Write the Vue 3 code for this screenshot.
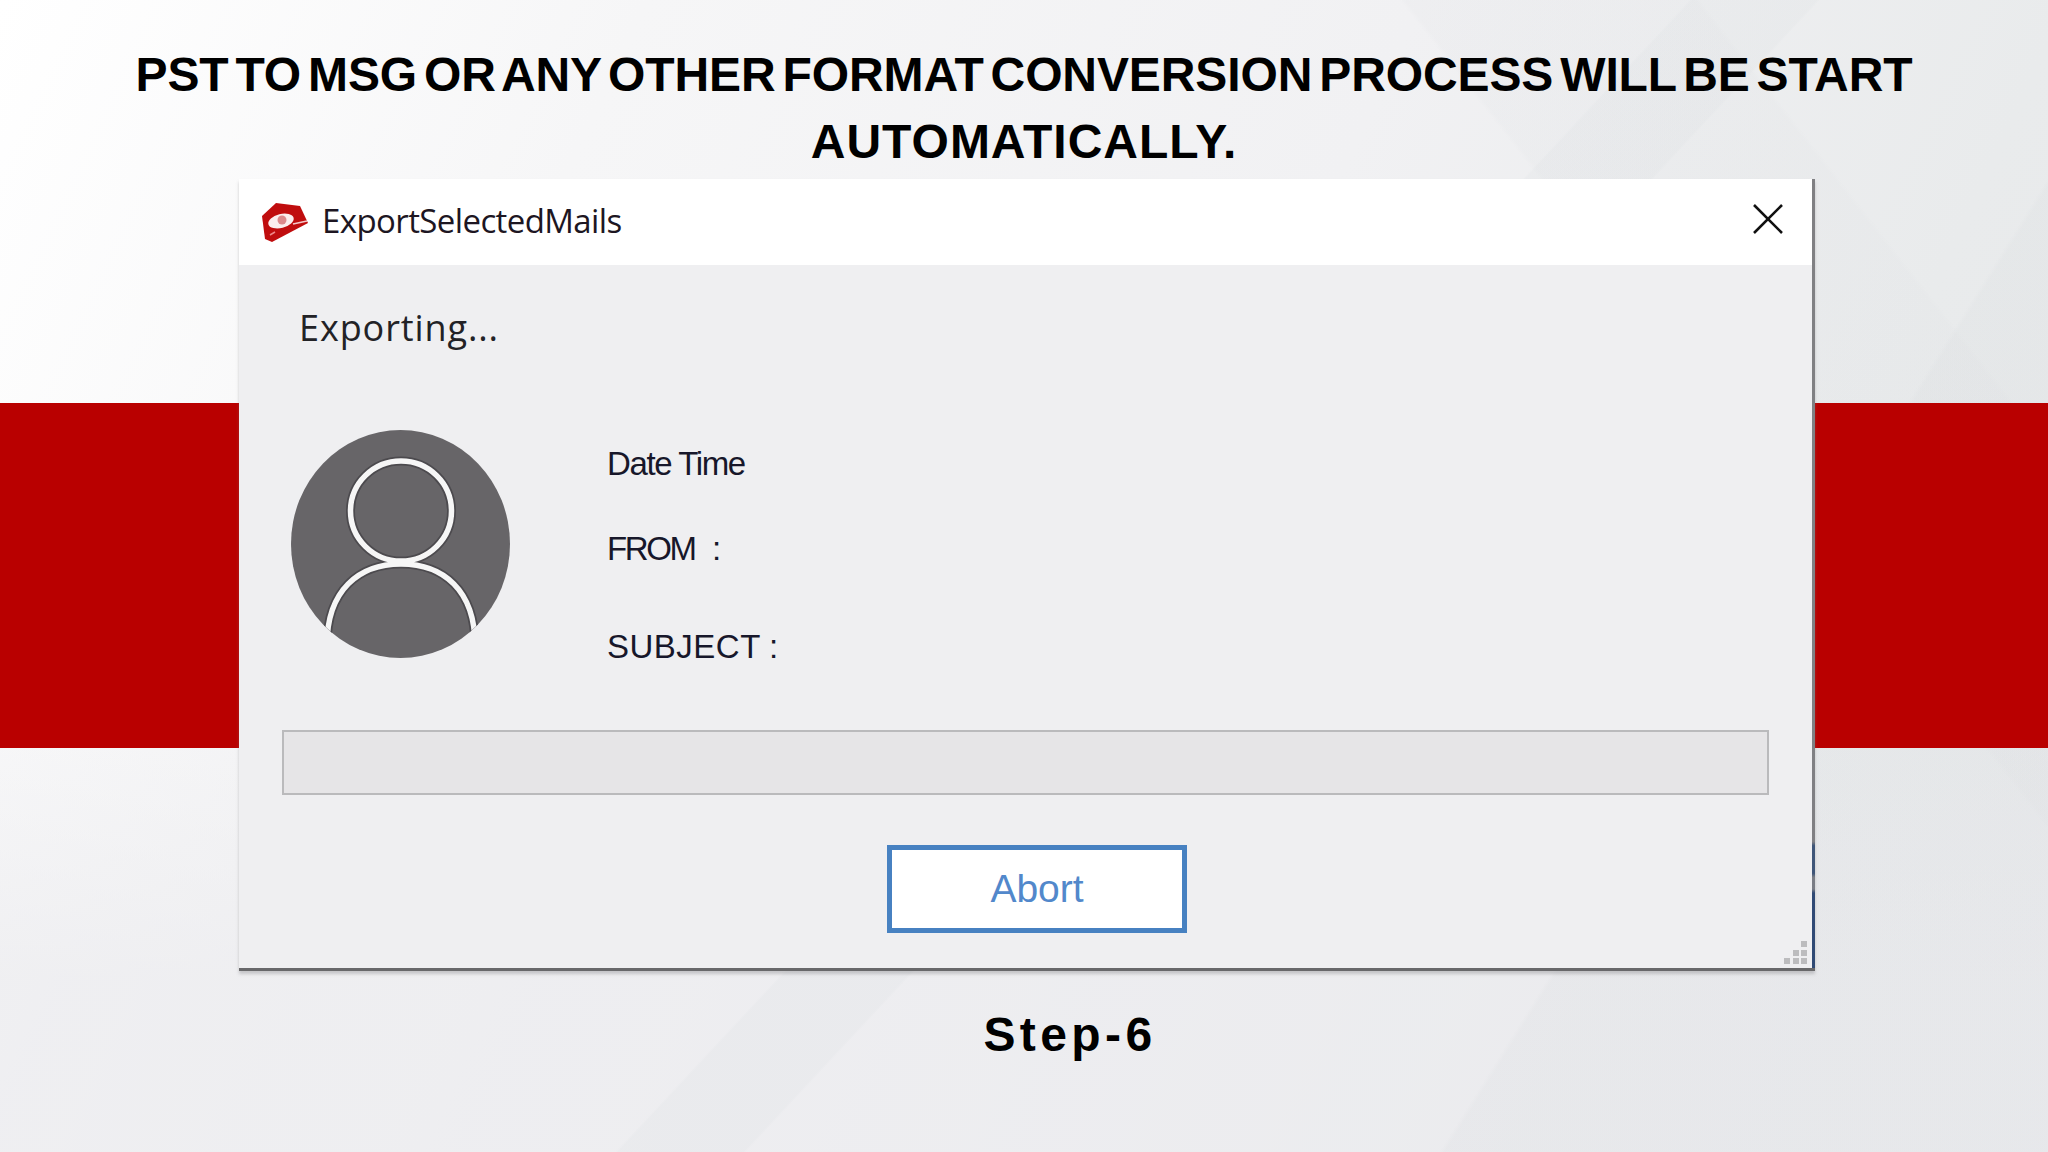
<script setup>
const labels = [
  { text: 'Date Time', cls: 'first' },
  { text: 'FROM  :', cls: 'second' },
  { text: 'SUBJECT :', cls: 'third' },
]
const grip = [0, 0, 1, 0, 1, 1, 1, 1, 1]
</script>

<template>
  <main class="page">
    <h1 class="headline">PST TO MSG OR ANY OTHER FORMAT CONVERSION PROCESS WILL BE START<br /><span class="headline-end">AUTOMATICALLY.</span></h1>

    <section class="dialog">
      <header class="titlebar">
        <svg class="logo" viewBox="0 0 46 40" width="46" height="40" aria-hidden="true">
          <path d="M14 1 L38 4 L46 21 L10 40 L3 37 L0 14 Z" fill="#c00d0e" />
          <ellipse cx="19" cy="19" rx="13" ry="7" transform="rotate(-14 19 19)" fill="#fbeeee" />
          <circle cx="20" cy="18" r="4.5" fill="#dc8a8c" />
          <path d="M31 22 L45 19" stroke="#f3c9ca" stroke-width="1.6" />
          <path d="M8 33 L13 30" stroke="#e88" stroke-width="1.5" />
        </svg>
        <span class="title">ExportSelectedMails</span>
        <svg class="close" viewBox="0 0 30 30" width="30" height="30" aria-hidden="true">
          <path d="M1 1 L29 29 M29 1 L1 29" stroke="#111" stroke-width="2.6" />
        </svg>
      </header>

      <div class="status">Exporting...</div>

      <div class="details">
        <svg class="avatar" viewBox="0 0 219 228" width="219" height="228" aria-hidden="true">
          <defs>
            <clipPath id="avatar-disc">
              <ellipse cx="109.5" cy="114" rx="109.5" ry="114" />
            </clipPath>
          </defs>
          <ellipse cx="109.5" cy="114" rx="109.5" ry="114" fill="#676568" />
          <g fill="none" clip-path="url(#avatar-disc)">
            <ellipse cx="110" cy="81" rx="50.5" ry="50" stroke="#4c4a4e" stroke-width="9" />
            <path d="M36 215 C36 160 68 134 110 134 C152 134 184 160 184 215" stroke="#4c4a4e" stroke-width="9" />
            <ellipse cx="110" cy="81" rx="50.5" ry="50" stroke="#f6f6f6" stroke-width="5.5" />
            <path d="M36 215 C36 160 68 134 110 134 C152 134 184 160 184 215" stroke="#f6f6f6" stroke-width="5.5" />
          </g>
        </svg>
        <ul class="fields">
          <li v-for="label in labels" :key="label.text" :class="label.cls">{{ label.text }}</li>
        </ul>
      </div>

      <div class="progress"></div>
      <button class="abort" type="button">Abort</button>

      <div class="grip" aria-hidden="true">
        <i v-for="(on, index) in grip" :key="index" :class="{ on }"></i>
      </div>
    </section>

    <p class="step">Step-6</p>
  </main>
</template>

<style scoped>
.page {
  width: 2048px;
  height: 1152px;
  overflow: hidden;
  box-sizing: border-box;
  padding-top: 42px;
  font-family: "Liberation Sans", Arial, sans-serif;
  color: #000;
  background:
    linear-gradient(#b90000, #b90000) 0 403px / 100% 345px no-repeat,
    linear-gradient(133deg, transparent 54.1%, rgba(214, 219, 222, 0.16) 54.2%, rgba(214, 219, 222, 0.16) 58.2%, transparent 58.3%),
    linear-gradient(122deg, transparent 78%, rgba(208, 212, 215, 0.14) 78.2%),
    linear-gradient(52deg, transparent 78%, rgba(222, 224, 227, 0.16) 78.2%, rgba(222, 224, 227, 0.16) 88%, transparent 88.2%),
    linear-gradient(180deg, transparent 55%, rgba(236, 236, 239, 0.75) 85%),
    linear-gradient(115deg, #ffffff 0%, #f6f6f7 25%, #f1f1f3 55%, #e9ebec 80%, #e6e8ea 100%);
}

.headline {
  margin: 0;
  text-align: center;
  font-size: 48px;
  font-weight: 700;
  line-height: 66.5px;
  letter-spacing: -0.1px;
  word-spacing: -6.3px;
}

.headline-end {
  letter-spacing: 1px;
}

.dialog {
  position: relative;
  box-sizing: border-box;
  width: 1576px;
  margin: 4px 0 0 239px;
  padding: 0 3px 35px 0;
  border-bottom: 3px solid #68686a;
  box-shadow: 0 3px 3px rgba(120, 120, 125, 0.35);
  background:
    linear-gradient(to bottom, #808083 0 84%, #3f5679 84.5% 88%, #7a7d85 88.5% 90%, #304a75 90.5% 100%) right top / 3px 100% no-repeat,
    #efeff1;
}

.titlebar {
  display: flex;
  align-items: center;
  height: 86px;
  padding: 0 29px 0 23px;
  background: #fff;
  font-family: "Open Sans", "Noto Sans", sans-serif;
}

.logo {
  flex: none;
}

.title {
  margin: -3px 0 0 14px;
  font-size: 33px;
  letter-spacing: -0.6px;
  color: #1d1622;
}

.close {
  margin-left: auto;
  margin-top: -6px;
}

.status {
  margin: 40px 0 0 60px;
  font-family: "Open Sans", "Noto Sans", sans-serif;
  font-size: 36px;
  line-height: 46px;
  letter-spacing: 0.9px;
  color: #222226;
}

.details {
  display: flex;
  align-items: flex-start;
  gap: 97px;
  margin: 79px 0 0 52px;
}

.avatar {
  flex: none;
}

.fields {
  margin: 14px 0 0;
  padding: 0;
  list-style: none;
  font-size: 33px;
  line-height: 40px;
  letter-spacing: -1.4px;
  white-space: pre;
  color: #17172a;
}

.second {
  margin-top: 45px;
  letter-spacing: -2.4px;
  word-spacing: 2px;
}

.third {
  margin-top: 58px;
  letter-spacing: 0.5px;
  word-spacing: -1px;
}

.progress {
  box-sizing: border-box;
  width: 1487px;
  height: 65px;
  margin: 63px 0 0 43px;
  border: 2px solid #bababc;
  background: #e6e5e7;
}

.abort {
  display: block;
  box-sizing: border-box;
  width: 300px;
  height: 88px;
  margin: 50px 0 0 648px;
  padding: 0 0 2px;
  border: 5px solid #4781c1;
  border-radius: 0;
  background: #fff;
  color: #5288cb;
  font-family: "Liberation Sans", Arial, sans-serif;
  font-size: 39px;
  line-height: 1;
}

.grip {
  position: absolute;
  right: 8px;
  bottom: 4px;
  display: grid;
  grid-template-columns: repeat(3, 6px);
  grid-auto-rows: 6px;
  gap: 2.5px;
}

.grip i {
  display: block;
}

.grip .on {
  background: #bcbcbe;
}

.step {
  margin: 38px 0 0;
  padding-left: 92px;
  text-align: center;
  font-size: 48px;
  font-weight: 700;
  line-height: 52px;
  letter-spacing: 4.4px;
}
</style>
